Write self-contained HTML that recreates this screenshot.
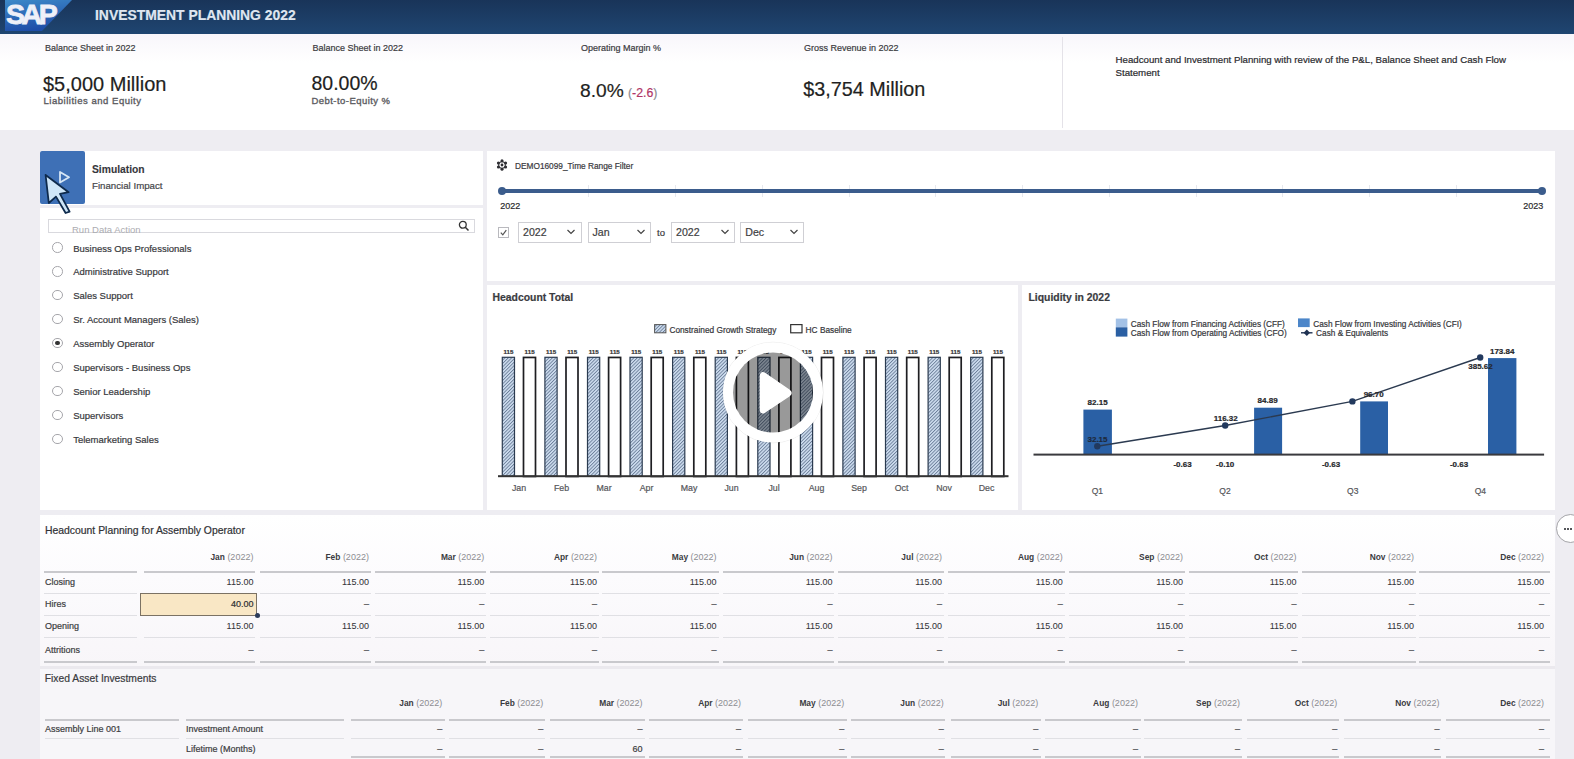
<!DOCTYPE html><html><head><meta charset="utf-8"><style>
*{margin:0;padding:0;box-sizing:border-box}
html,body{width:1574px;height:759px;overflow:hidden;background:#eeedf2;font-family:"Liberation Sans",sans-serif;color:#32363a}
.t{position:absolute;white-space:nowrap;line-height:1;z-index:2;-webkit-text-stroke:0.2px currentColor}
.b{position:absolute}
</style></head><body>
<div class="b" style="left:0;top:0;width:1574px;height:34px;background:linear-gradient(#193459,#1f4571)"></div>
<svg class="b" style="left:0;top:0" width="80" height="34"><defs><linearGradient id="sapg" x1="0" y1="0" x2="0.3" y2="1"><stop offset="0" stop-color="#3d8ac9"/><stop offset="1" stop-color="#1f4ea8"/></linearGradient></defs><polygon points="5,0 72,0 42,31 5,31" fill="url(#sapg)"/></svg>
<div class="t" style="left:6.0px;top:0.37px;font-size:28.5px;font-weight:bold;color:#eef0f8;letter-spacing:-3.4px;-webkit-text-stroke:0.8px #eef0f8">SAP</div>
<div class="t" style="left:95.0px;top:8.73px;font-size:13.9px;font-weight:bold;color:#dfe6f0">INVESTMENT PLANNING 2022</div>
<div class="b" style="left:0;top:34px;width:1574px;height:96px;background:linear-gradient(#f8f6fb,#fff 30%)"></div>
<div class="b" style="left:1062px;top:37px;width:1px;height:91px;background:#e4e2e8"></div>
<div class="t" style="left:45.0px;top:44.38px;font-size:9px;color:#3b3b3f">Balance Sheet in 2022</div>
<div class="t" style="left:43.0px;top:73.87px;font-size:20px;color:#1f1f22">$5,000 Million</div>
<div class="t" style="left:43.5px;top:95.86px;font-size:9.5px;color:#5c5c62;letter-spacing:0.52px;-webkit-text-stroke:0.35px currentColor">Liabilities and Equity</div>
<div class="t" style="left:312.5px;top:44.38px;font-size:9px;color:#3b3b3f">Balance Sheet in 2022</div>
<div class="t" style="left:311.5px;top:74.09px;font-size:19.5px;color:#1f1f22">80.00%</div>
<div class="t" style="left:311.5px;top:95.86px;font-size:9.5px;color:#5c5c62;letter-spacing:0.45px;-webkit-text-stroke:0.35px currentColor">Debt-to-Equity %</div>
<div class="t" style="left:581.0px;top:44.38px;font-size:9px;color:#3b3b3f">Operating Margin %</div>
<div class="t" style="left:580.0px;top:80.85px;font-size:19.2px;color:#1f1f22">8.0%</div>
<div class="t" style="left:628.0px;top:86.69px;font-size:12.3px;color:#8a8a90">(<span style="color:#b03466">-2.6</span>)</div>
<div class="t" style="left:804.0px;top:44.38px;font-size:9px;color:#3b3b3f">Gross Revenue in 2022</div>
<div class="t" style="left:803.3px;top:80.34px;font-size:19.8px;color:#1f1f22">$3,754 Million</div>
<div class="t" style="left:1115.5px;top:55.29px;font-size:9.7px;color:#2a2a2e">Headcount and Investment Planning with review of the P&amp;L, Balance Sheet and Cash Flow</div>
<div class="t" style="left:1115.5px;top:68.29px;font-size:9.7px;color:#2a2a2e">Statement</div>
<div class="b" style="left:40px;top:151px;width:443px;height:54px;background:#fff;"></div>
<div class="b" style="left:40px;top:208px;width:443px;height:302px;background:#fff;"></div>
<div class="b" style="left:487px;top:151px;width:1068px;height:130px;background:#fff;"></div>
<div class="b" style="left:487px;top:285px;width:531px;height:225px;background:#fff;"></div>
<div class="b" style="left:1022px;top:285px;width:533px;height:225px;background:#fff;"></div>
<div class="b" style="left:40px;top:515px;width:1515px;height:152px;background:linear-gradient(#fff,#fcfbfd 40%,#f8f6f9);"></div>
<div class="b" style="left:40px;top:665.5px;width:1515px;height:3px;background:#ebe9ee;"></div>
<div class="b" style="left:40px;top:668.5px;width:1515px;height:91px;background:#f7f6f9;"></div>
<div class="b" style="left:40px;top:151px;width:45px;height:53px;background:#3e70b6;border-radius:2px"></div>
<svg class="b" style="left:57px;top:169px" width="16" height="17"><polygon points="3,3 12,8.3 3,13.5" fill="none" stroke="#d6e6f6" stroke-width="1.8" stroke-linejoin="round"/></svg>
<div class="t" style="left:92.0px;top:165.48px;font-size:10.3px;font-weight:bold;color:#36373b;-webkit-text-stroke:0.1px">Simulation</div>
<div class="t" style="left:92.0px;top:181.39px;font-size:9.7px;color:#45464a">Financial Impact</div>
<div class="b" style="left:48px;top:219px;width:427px;height:14px;border:1px solid #d9d9de;background:#fff"></div>
<div class="t" style="left:72.0px;top:225.26px;font-size:9.5px;color:#acacb1;-webkit-text-stroke:0">Run Data Action</div>
<svg class="b" style="left:458px;top:220px" width="12" height="12"><circle cx="4.8" cy="4.8" r="3.4" fill="none" stroke="#333" stroke-width="1.3"/><line x1="7.3" y1="7.3" x2="10.5" y2="10.5" stroke="#333" stroke-width="1.5"/></svg>
<div class="b" style="left:52.2px;top:242.3px;width:10.4px;height:10.4px;border:1.3px solid #a6a6ab;border-radius:50%;background:#fff"></div>
<div class="t" style="left:73.2px;top:243.56px;font-size:9.5px;color:#38393d">Business Ops Professionals</div>
<div class="b" style="left:52.2px;top:266.2px;width:10.4px;height:10.4px;border:1.3px solid #a6a6ab;border-radius:50%;background:#fff"></div>
<div class="t" style="left:73.2px;top:267.46px;font-size:9.5px;color:#38393d">Administrative Support</div>
<div class="b" style="left:52.2px;top:290.1px;width:10.4px;height:10.4px;border:1.3px solid #a6a6ab;border-radius:50%;background:#fff"></div>
<div class="t" style="left:73.2px;top:291.36px;font-size:9.5px;color:#38393d">Sales Support</div>
<div class="b" style="left:52.2px;top:314.0px;width:10.4px;height:10.4px;border:1.3px solid #a6a6ab;border-radius:50%;background:#fff"></div>
<div class="t" style="left:73.2px;top:315.26px;font-size:9.5px;color:#38393d">Sr. Account Managers (Sales)</div>
<div class="b" style="left:52.2px;top:337.9px;width:10.4px;height:10.4px;border:1.3px solid #a6a6ab;border-radius:50%;background:#fff"></div>
<div class="b" style="left:55.2px;top:340.9px;width:4.4px;height:4.4px;border-radius:50%;background:#333"></div>
<div class="t" style="left:73.2px;top:339.16px;font-size:9.5px;color:#38393d">Assembly Operator</div>
<div class="b" style="left:52.2px;top:361.8px;width:10.4px;height:10.4px;border:1.3px solid #a6a6ab;border-radius:50%;background:#fff"></div>
<div class="t" style="left:73.2px;top:363.06px;font-size:9.5px;color:#38393d">Supervisors - Business Ops</div>
<div class="b" style="left:52.2px;top:385.7px;width:10.4px;height:10.4px;border:1.3px solid #a6a6ab;border-radius:50%;background:#fff"></div>
<div class="t" style="left:73.2px;top:386.96px;font-size:9.5px;color:#38393d">Senior Leadership</div>
<div class="b" style="left:52.2px;top:409.6px;width:10.4px;height:10.4px;border:1.3px solid #a6a6ab;border-radius:50%;background:#fff"></div>
<div class="t" style="left:73.2px;top:410.86px;font-size:9.5px;color:#38393d">Supervisors</div>
<div class="b" style="left:52.2px;top:433.5px;width:10.4px;height:10.4px;border:1.3px solid #a6a6ab;border-radius:50%;background:#fff"></div>
<div class="t" style="left:73.2px;top:434.76px;font-size:9.5px;color:#38393d">Telemarketing Sales</div>
<svg class="b" style="left:40px;top:170px" width="36" height="48"><path d="M5.6,5 L28.6,22.2 L20,23.9 L29.6,41.6 L25.6,43 L16,26.6 L8.8,33 Z" fill="#cfe6f8" stroke="#0e2a4c" stroke-width="1.8" stroke-linejoin="round"/></svg>
<svg class="b" style="left:496px;top:159px" width="12" height="12"><circle cx="6" cy="6" r="3.3" fill="none" stroke="#2e2e33" stroke-width="1.1"/><circle cx="6.00" cy="10.20" r="1.5" fill="#2e2e33"/><circle cx="9.64" cy="8.10" r="1.5" fill="#2e2e33"/><circle cx="9.64" cy="3.90" r="1.5" fill="#2e2e33"/><circle cx="6.00" cy="1.80" r="1.5" fill="#2e2e33"/><circle cx="2.36" cy="3.90" r="1.5" fill="#2e2e33"/><circle cx="2.36" cy="8.10" r="1.5" fill="#2e2e33"/><circle cx="6" cy="6" r="1.4" fill="#2e2e33"/></svg>
<div class="t" style="left:515.0px;top:161.87px;font-size:8.3px;color:#3a3a3e">DEMO16099_Time Range Filter</div>
<div class="b" style="left:588.2px;top:185px;width:1px;height:12px;background:#e6e8ee"></div>
<div class="b" style="left:675.0px;top:185px;width:1px;height:12px;background:#e6e8ee"></div>
<div class="b" style="left:761.8px;top:185px;width:1px;height:12px;background:#e6e8ee"></div>
<div class="b" style="left:848.5px;top:185px;width:1px;height:12px;background:#e6e8ee"></div>
<div class="b" style="left:935.2px;top:185px;width:1px;height:12px;background:#e6e8ee"></div>
<div class="b" style="left:1022.0px;top:185px;width:1px;height:12px;background:#e6e8ee"></div>
<div class="b" style="left:1108.8px;top:185px;width:1px;height:12px;background:#e6e8ee"></div>
<div class="b" style="left:1195.5px;top:185px;width:1px;height:12px;background:#e6e8ee"></div>
<div class="b" style="left:1282.2px;top:185px;width:1px;height:12px;background:#e6e8ee"></div>
<div class="b" style="left:1369.0px;top:185px;width:1px;height:12px;background:#e6e8ee"></div>
<div class="b" style="left:1455.8px;top:185px;width:1px;height:12px;background:#e6e8ee"></div>
<div class="b" style="left:501px;top:189.2px;width:1041px;height:3.6px;background:#3b5c8c;border-radius:2px"></div>
<div class="b" style="left:497.5px;top:187px;width:8px;height:8px;background:#3b5c8c;border-radius:50%"></div>
<div class="b" style="left:1537.5px;top:187px;width:8px;height:8px;background:#3b5c8c;border-radius:50%"></div>
<div class="t" style="left:500.2px;top:202.18px;font-size:9px;color:#2b2b2e">2022</div>
<div class="t" style="left:1523.3px;top:202.18px;font-size:9px;color:#2b2b2e">2023</div>
<div class="b" style="left:498px;top:227px;width:11px;height:11px;border:1px solid #b9b9be;background:#fff"></div>
<svg class="b" style="left:498px;top:227px" width="11" height="11"><polyline points="2.8,5.6 4.8,7.8 8.3,3.2" fill="none" stroke="#555" stroke-width="1.2"/></svg>
<div class="b" style="left:518px;top:221.5px;width:63.5px;height:21px;border:1px solid #cfcfd4;background:#fff"></div>
<div class="t" style="left:523.0px;top:227.13px;font-size:10.6px;color:#3e3e42">2022</div>
<svg class="b" style="left:566.0px;top:228px" width="10" height="8"><polyline points="1.5,2 5,5.5 8.5,2" fill="none" stroke="#444" stroke-width="1.2"/></svg>
<div class="b" style="left:587.5px;top:221.5px;width:63.5px;height:21px;border:1px solid #cfcfd4;background:#fff"></div>
<div class="t" style="left:592.5px;top:227.13px;font-size:10.6px;color:#3e3e42">Jan</div>
<svg class="b" style="left:635.5px;top:228px" width="10" height="8"><polyline points="1.5,2 5,5.5 8.5,2" fill="none" stroke="#444" stroke-width="1.2"/></svg>
<div class="t" style="left:657.0px;top:228.06px;font-size:9.5px;color:#3a3a3e">to</div>
<div class="b" style="left:671px;top:221.5px;width:64px;height:21px;border:1px solid #cfcfd4;background:#fff"></div>
<div class="t" style="left:676.0px;top:227.13px;font-size:10.6px;color:#3e3e42">2022</div>
<svg class="b" style="left:719.5px;top:228px" width="10" height="8"><polyline points="1.5,2 5,5.5 8.5,2" fill="none" stroke="#444" stroke-width="1.2"/></svg>
<div class="b" style="left:740.3px;top:221.5px;width:64px;height:21px;border:1px solid #cfcfd4;background:#fff"></div>
<div class="t" style="left:745.3px;top:227.13px;font-size:10.6px;color:#3e3e42">Dec</div>
<svg class="b" style="left:788.8px;top:228px" width="10" height="8"><polyline points="1.5,2 5,5.5 8.5,2" fill="none" stroke="#444" stroke-width="1.2"/></svg>
<div class="t" style="left:492.5px;top:293.20px;font-size:10.4px;font-weight:bold;color:#3a3b3f">Headcount Total</div>
<div class="t" style="left:669.4px;top:325.57px;font-size:8.3px;color:#36373b">Constrained Growth Strategy</div>
<div class="t" style="left:805.6px;top:325.57px;font-size:8.3px;color:#36373b">HC Baseline</div>
<div class="t" style="left:508.5px;transform:translateX(-50%);top:349.15px;font-size:6.2px;font-weight:bold;color:#333">115</div>
<div class="t" style="left:529.6px;transform:translateX(-50%);top:349.15px;font-size:6.2px;font-weight:bold;color:#333">115</div>
<div class="t" style="left:519.0px;transform:translateX(-50%);top:483.55px;font-size:8.8px;color:#55565a">Jan</div>
<div class="t" style="left:551.1px;transform:translateX(-50%);top:349.15px;font-size:6.2px;font-weight:bold;color:#333">115</div>
<div class="t" style="left:572.2px;transform:translateX(-50%);top:349.15px;font-size:6.2px;font-weight:bold;color:#333">115</div>
<div class="t" style="left:561.5px;transform:translateX(-50%);top:483.55px;font-size:8.8px;color:#55565a">Feb</div>
<div class="t" style="left:593.7px;transform:translateX(-50%);top:349.15px;font-size:6.2px;font-weight:bold;color:#333">115</div>
<div class="t" style="left:614.8px;transform:translateX(-50%);top:349.15px;font-size:6.2px;font-weight:bold;color:#333">115</div>
<div class="t" style="left:604.0px;transform:translateX(-50%);top:483.55px;font-size:8.8px;color:#55565a">Mar</div>
<div class="t" style="left:636.2px;transform:translateX(-50%);top:349.15px;font-size:6.2px;font-weight:bold;color:#333">115</div>
<div class="t" style="left:657.3px;transform:translateX(-50%);top:349.15px;font-size:6.2px;font-weight:bold;color:#333">115</div>
<div class="t" style="left:646.5px;transform:translateX(-50%);top:483.55px;font-size:8.8px;color:#55565a">Apr</div>
<div class="t" style="left:678.8px;transform:translateX(-50%);top:349.15px;font-size:6.2px;font-weight:bold;color:#333">115</div>
<div class="t" style="left:699.9px;transform:translateX(-50%);top:349.15px;font-size:6.2px;font-weight:bold;color:#333">115</div>
<div class="t" style="left:689.0px;transform:translateX(-50%);top:483.55px;font-size:8.8px;color:#55565a">May</div>
<div class="t" style="left:721.4px;transform:translateX(-50%);top:349.15px;font-size:6.2px;font-weight:bold;color:#333">115</div>
<div class="t" style="left:742.5px;transform:translateX(-50%);top:349.15px;font-size:6.2px;font-weight:bold;color:#333">115</div>
<div class="t" style="left:731.5px;transform:translateX(-50%);top:483.55px;font-size:8.8px;color:#55565a">Jun</div>
<div class="t" style="left:764.0px;transform:translateX(-50%);top:349.15px;font-size:6.2px;font-weight:bold;color:#333">115</div>
<div class="t" style="left:785.1px;transform:translateX(-50%);top:349.15px;font-size:6.2px;font-weight:bold;color:#333">115</div>
<div class="t" style="left:774.0px;transform:translateX(-50%);top:483.55px;font-size:8.8px;color:#55565a">Jul</div>
<div class="t" style="left:806.6px;transform:translateX(-50%);top:349.15px;font-size:6.2px;font-weight:bold;color:#333">115</div>
<div class="t" style="left:827.7px;transform:translateX(-50%);top:349.15px;font-size:6.2px;font-weight:bold;color:#333">115</div>
<div class="t" style="left:816.5px;transform:translateX(-50%);top:483.55px;font-size:8.8px;color:#55565a">Aug</div>
<div class="t" style="left:849.1px;transform:translateX(-50%);top:349.15px;font-size:6.2px;font-weight:bold;color:#333">115</div>
<div class="t" style="left:870.2px;transform:translateX(-50%);top:349.15px;font-size:6.2px;font-weight:bold;color:#333">115</div>
<div class="t" style="left:859.0px;transform:translateX(-50%);top:483.55px;font-size:8.8px;color:#55565a">Sep</div>
<div class="t" style="left:891.7px;transform:translateX(-50%);top:349.15px;font-size:6.2px;font-weight:bold;color:#333">115</div>
<div class="t" style="left:912.8px;transform:translateX(-50%);top:349.15px;font-size:6.2px;font-weight:bold;color:#333">115</div>
<div class="t" style="left:901.5px;transform:translateX(-50%);top:483.55px;font-size:8.8px;color:#55565a">Oct</div>
<div class="t" style="left:934.3px;transform:translateX(-50%);top:349.15px;font-size:6.2px;font-weight:bold;color:#333">115</div>
<div class="t" style="left:955.4px;transform:translateX(-50%);top:349.15px;font-size:6.2px;font-weight:bold;color:#333">115</div>
<div class="t" style="left:944.0px;transform:translateX(-50%);top:483.55px;font-size:8.8px;color:#55565a">Nov</div>
<div class="t" style="left:976.9px;transform:translateX(-50%);top:349.15px;font-size:6.2px;font-weight:bold;color:#333">115</div>
<div class="t" style="left:998.0px;transform:translateX(-50%);top:349.15px;font-size:6.2px;font-weight:bold;color:#333">115</div>
<div class="t" style="left:986.5px;transform:translateX(-50%);top:483.55px;font-size:8.8px;color:#55565a">Dec</div>
<div class="t" style="left:1028.5px;top:293.20px;font-size:10.4px;font-weight:bold;color:#3a3b3f">Liquidity in 2022</div>
<div class="t" style="left:1130.8px;top:320.82px;font-size:8.25px;color:#36373b">Cash Flow from Financing Activities (CFF)</div>
<div class="t" style="left:1130.8px;top:329.82px;font-size:8.25px;color:#36373b">Cash Flow from Operating Activities (CFO)</div>
<div class="t" style="left:1313.3px;top:320.82px;font-size:8.25px;color:#36373b">Cash Flow from Investing Activities (CFI)</div>
<div class="t" style="left:1316.1px;top:329.82px;font-size:8.25px;color:#36373b">Cash &amp; Equivalents</div>
<div class="t" style="left:1097.6px;transform:translateX(-50%);top:399.33px;font-size:8px;font-weight:bold;color:#26272b">82.15</div>
<div class="t" style="left:1267.6px;transform:translateX(-50%);top:397.13px;font-size:8px;font-weight:bold;color:#26272b">84.89</div>
<div class="t" style="left:1373.7px;transform:translateX(-50%);top:391.03px;font-size:8px;font-weight:bold;color:#26272b">96.70</div>
<div class="t" style="left:1502.2px;transform:translateX(-50%);top:348.33px;font-size:8px;font-weight:bold;color:#26272b">173.84</div>
<div class="t" style="left:1097.5px;transform:translateX(-50%);top:435.73px;font-size:8px;font-weight:bold;color:#1e2a3c">32.15</div>
<div class="t" style="left:1225.7px;transform:translateX(-50%);top:414.83px;font-size:8px;font-weight:bold;color:#26272b">116.32</div>
<div class="t" style="left:1480.5px;transform:translateX(-50%);top:363.03px;font-size:8px;font-weight:bold;color:#26272b">385.62</div>
<div class="t" style="left:1182.5px;transform:translateX(-50%);top:460.63px;font-size:8px;font-weight:bold;color:#26272b">-0.63</div>
<div class="t" style="left:1225.2px;transform:translateX(-50%);top:460.63px;font-size:8px;font-weight:bold;color:#26272b">-0.10</div>
<div class="t" style="left:1331.0px;transform:translateX(-50%);top:460.63px;font-size:8px;font-weight:bold;color:#26272b">-0.63</div>
<div class="t" style="left:1459.0px;transform:translateX(-50%);top:460.63px;font-size:8px;font-weight:bold;color:#26272b">-0.63</div>
<div class="t" style="left:1097.3px;transform:translateX(-50%);top:487.40px;font-size:8.5px;color:#55565a">Q1</div>
<div class="t" style="left:1225.0px;transform:translateX(-50%);top:487.40px;font-size:8.5px;color:#55565a">Q2</div>
<div class="t" style="left:1352.7px;transform:translateX(-50%);top:487.40px;font-size:8.5px;color:#55565a">Q3</div>
<div class="t" style="left:1480.4px;transform:translateX(-50%);top:487.40px;font-size:8.5px;color:#55565a">Q4</div>
<svg class="b" style="left:0;top:0" width="1574" height="759"><defs><pattern id="hatch" patternUnits="userSpaceOnUse" width="2.4" height="2.4" patternTransform="rotate(45)"><rect width="2.4" height="2.4" fill="#cfdef0"/><rect width="0.9" height="2.4" fill="#6b7e99"/></pattern></defs><rect x="654.6" y="324.6" width="11.3" height="8.2" fill="url(#hatch)" stroke="#555" stroke-width="1"/><rect x="790.7" y="324.6" width="11.3" height="8.2" fill="#fff" stroke="#333" stroke-width="1.2"/><rect x="502.3" y="357.3" width="12.2" height="119" fill="url(#hatch)" stroke="#2b3b50" stroke-width="1.2"/><rect x="523.5" y="357.45" width="12" height="119" fill="#fff" stroke="#1e1e22" stroke-width="1.7"/><rect x="544.9" y="357.3" width="12.2" height="119" fill="url(#hatch)" stroke="#2b3b50" stroke-width="1.2"/><rect x="566.0" y="357.45" width="12" height="119" fill="#fff" stroke="#1e1e22" stroke-width="1.7"/><rect x="587.5" y="357.3" width="12.2" height="119" fill="url(#hatch)" stroke="#2b3b50" stroke-width="1.2"/><rect x="608.6" y="357.45" width="12" height="119" fill="#fff" stroke="#1e1e22" stroke-width="1.7"/><rect x="630.0" y="357.3" width="12.2" height="119" fill="url(#hatch)" stroke="#2b3b50" stroke-width="1.2"/><rect x="651.2" y="357.45" width="12" height="119" fill="#fff" stroke="#1e1e22" stroke-width="1.7"/><rect x="672.6" y="357.3" width="12.2" height="119" fill="url(#hatch)" stroke="#2b3b50" stroke-width="1.2"/><rect x="693.8" y="357.45" width="12" height="119" fill="#fff" stroke="#1e1e22" stroke-width="1.7"/><rect x="715.2" y="357.3" width="12.2" height="119" fill="url(#hatch)" stroke="#2b3b50" stroke-width="1.2"/><rect x="736.4" y="357.45" width="12" height="119" fill="#fff" stroke="#1e1e22" stroke-width="1.7"/><rect x="757.8" y="357.3" width="12.2" height="119" fill="url(#hatch)" stroke="#2b3b50" stroke-width="1.2"/><rect x="778.9" y="357.45" width="12" height="119" fill="#fff" stroke="#1e1e22" stroke-width="1.7"/><rect x="800.4" y="357.3" width="12.2" height="119" fill="url(#hatch)" stroke="#2b3b50" stroke-width="1.2"/><rect x="821.5" y="357.45" width="12" height="119" fill="#fff" stroke="#1e1e22" stroke-width="1.7"/><rect x="842.9" y="357.3" width="12.2" height="119" fill="url(#hatch)" stroke="#2b3b50" stroke-width="1.2"/><rect x="864.1" y="357.45" width="12" height="119" fill="#fff" stroke="#1e1e22" stroke-width="1.7"/><rect x="885.5" y="357.3" width="12.2" height="119" fill="url(#hatch)" stroke="#2b3b50" stroke-width="1.2"/><rect x="906.7" y="357.45" width="12" height="119" fill="#fff" stroke="#1e1e22" stroke-width="1.7"/><rect x="928.1" y="357.3" width="12.2" height="119" fill="url(#hatch)" stroke="#2b3b50" stroke-width="1.2"/><rect x="949.2" y="357.45" width="12" height="119" fill="#fff" stroke="#1e1e22" stroke-width="1.7"/><rect x="970.7" y="357.3" width="12.2" height="119" fill="url(#hatch)" stroke="#2b3b50" stroke-width="1.2"/><rect x="991.8" y="357.45" width="12" height="119" fill="#fff" stroke="#1e1e22" stroke-width="1.7"/><rect x="498" y="475.2" width="510.5" height="2" fill="#333"/><rect x="1115.8" y="318.6" width="11.6" height="8.7" fill="#a3c1e6"/><rect x="1115.8" y="327.3" width="11.6" height="9.3" fill="#2a5fa3"/><rect x="1298" y="318.4" width="11.7" height="8.7" fill="#4c86c9"/><line x1="1301" y1="332.8" x2="1312.5" y2="332.8" stroke="#1f3252" stroke-width="1.4"/><path d="M1306.8,329.6 L1310,332.8 L1306.8,336 L1303.6,332.8 Z" fill="#1f3252"/><rect x="1083.4" y="409.6" width="28.5" height="45.0" fill="#2a60a5"/><rect x="1254.1" y="407.7" width="28.0" height="46.9" fill="#2a60a5"/><rect x="1360.2" y="401.4" width="27.8" height="53.2" fill="#2a60a5"/><rect x="1488" y="358.1" width="28.4" height="96.5" fill="#2a60a5"/><rect x="1033.5" y="453.6" width="510.6" height="2" fill="#3a3a3e"/><polyline points="1097.3,446.3 1225.2,425.5 1352.4,401.4 1480.2,357.5" fill="none" stroke="#2b3a50" stroke-width="1.4"/><circle cx="1097.3" cy="446.3" r="3.2" fill="#22395e"/><circle cx="1225.2" cy="425.5" r="3.2" fill="#22395e"/><circle cx="1352.4" cy="401.4" r="3.2" fill="#22395e"/><circle cx="1480.2" cy="357.5" r="3.2" fill="#22395e"/></svg>
<div class="t" style="left:45.0px;top:525.50px;font-size:10.4px;color:#303135">Headcount Planning for Assembly Operator</div>
<div class="b" style="left:140.4px;top:593px;width:117px;height:22.5px;background:#f9e7c5;border:1px solid #7b7264;z-index:1"></div>
<div class="b" style="left:255px;top:613px;width:5px;height:5px;border-radius:50%;background:#2c3c5a;z-index:1"></div>
<div class="b" style="left:44.3px;top:570.5px;width:93.1px;height:2px;background:#c9c9cd"></div>
<div class="b" style="left:44.3px;top:660.8px;width:93.1px;height:2px;background:#c9c9cd"></div>
<div class="b" style="left:44.3px;top:593.0px;width:93.1px;height:1px;background:#e0e0e4"></div>
<div class="b" style="left:44.3px;top:615.0px;width:93.1px;height:1px;background:#e0e0e4"></div>
<div class="b" style="left:44.3px;top:637.3px;width:93.1px;height:1px;background:#e0e0e4"></div>
<div class="t" style="left:45.0px;top:578.28px;font-size:9px;color:#3c3d41">Closing</div>
<div class="t" style="left:45.0px;top:600.08px;font-size:9px;color:#3c3d41">Hires</div>
<div class="t" style="left:45.0px;top:622.38px;font-size:9px;color:#3c3d41">Opening</div>
<div class="t" style="left:45.0px;top:646.38px;font-size:9px;color:#3c3d41">Attritions</div>
<div class="t" style="right:1320.6px;top:553.48px;font-size:9px;color:#8d8d92;-webkit-text-stroke:0"><span style="font-weight:bold;color:#3a3b3f;font-size:8.4px;-webkit-text-stroke:0">Jan</span> (2022)</div>
<div class="b" style="left:144.1px;top:570.5px;width:111.3px;height:2px;background:#c9c9cd"></div>
<div class="b" style="left:144.1px;top:660.8px;width:111.3px;height:2px;background:#c9c9cd"></div>
<div class="b" style="left:144.1px;top:593.0px;width:111.3px;height:1px;background:#e0e0e4"></div>
<div class="b" style="left:144.1px;top:615.0px;width:111.3px;height:1px;background:#e0e0e4"></div>
<div class="b" style="left:144.1px;top:637.3px;width:111.3px;height:1px;background:#e0e0e4"></div>
<div class="t" style="right:1320.6px;top:578.28px;font-size:9px;color:#333438;-webkit-text-stroke:0.05px">115.00</div>
<div class="t" style="right:1320.6px;top:622.38px;font-size:9px;color:#333438;-webkit-text-stroke:0.05px">115.00</div>
<div class="t" style="right:1320.6px;top:646.38px;font-size:9px;color:#55565a">&ndash;</div>
<div class="t" style="right:1320.6px;top:600.08px;font-size:9px;color:#2e2f33">40.00</div>
<div class="t" style="right:1205.1px;top:553.48px;font-size:9px;color:#8d8d92;-webkit-text-stroke:0"><span style="font-weight:bold;color:#3a3b3f;font-size:8.4px;-webkit-text-stroke:0">Feb</span> (2022)</div>
<div class="b" style="left:259.7px;top:570.5px;width:111.8px;height:2px;background:#c9c9cd"></div>
<div class="b" style="left:259.7px;top:660.8px;width:111.8px;height:2px;background:#c9c9cd"></div>
<div class="b" style="left:259.7px;top:593.0px;width:111.8px;height:1px;background:#e0e0e4"></div>
<div class="b" style="left:259.7px;top:615.0px;width:111.8px;height:1px;background:#e0e0e4"></div>
<div class="b" style="left:259.7px;top:637.3px;width:111.8px;height:1px;background:#e0e0e4"></div>
<div class="t" style="right:1205.1px;top:578.28px;font-size:9px;color:#333438;-webkit-text-stroke:0.05px">115.00</div>
<div class="t" style="right:1205.1px;top:622.38px;font-size:9px;color:#333438;-webkit-text-stroke:0.05px">115.00</div>
<div class="t" style="right:1205.1px;top:646.38px;font-size:9px;color:#55565a">&ndash;</div>
<div class="t" style="right:1205.1px;top:600.08px;font-size:9px;color:#55565a">&ndash;</div>
<div class="t" style="right:1089.7px;top:553.48px;font-size:9px;color:#8d8d92;-webkit-text-stroke:0"><span style="font-weight:bold;color:#3a3b3f;font-size:8.4px;-webkit-text-stroke:0">Mar</span> (2022)</div>
<div class="b" style="left:375.0px;top:570.5px;width:111.3px;height:2px;background:#c9c9cd"></div>
<div class="b" style="left:375.0px;top:660.8px;width:111.3px;height:2px;background:#c9c9cd"></div>
<div class="b" style="left:375.0px;top:593.0px;width:111.3px;height:1px;background:#e0e0e4"></div>
<div class="b" style="left:375.0px;top:615.0px;width:111.3px;height:1px;background:#e0e0e4"></div>
<div class="b" style="left:375.0px;top:637.3px;width:111.3px;height:1px;background:#e0e0e4"></div>
<div class="t" style="right:1089.7px;top:578.28px;font-size:9px;color:#333438;-webkit-text-stroke:0.05px">115.00</div>
<div class="t" style="right:1089.7px;top:622.38px;font-size:9px;color:#333438;-webkit-text-stroke:0.05px">115.00</div>
<div class="t" style="right:1089.7px;top:646.38px;font-size:9px;color:#55565a">&ndash;</div>
<div class="t" style="right:1089.7px;top:600.08px;font-size:9px;color:#55565a">&ndash;</div>
<div class="t" style="right:977.1px;top:553.48px;font-size:9px;color:#8d8d92;-webkit-text-stroke:0"><span style="font-weight:bold;color:#3a3b3f;font-size:8.4px;-webkit-text-stroke:0">Apr</span> (2022)</div>
<div class="b" style="left:490.2px;top:570.5px;width:108.5px;height:2px;background:#c9c9cd"></div>
<div class="b" style="left:490.2px;top:660.8px;width:108.5px;height:2px;background:#c9c9cd"></div>
<div class="b" style="left:490.2px;top:593.0px;width:108.5px;height:1px;background:#e0e0e4"></div>
<div class="b" style="left:490.2px;top:615.0px;width:108.5px;height:1px;background:#e0e0e4"></div>
<div class="b" style="left:490.2px;top:637.3px;width:108.5px;height:1px;background:#e0e0e4"></div>
<div class="t" style="right:977.1px;top:578.28px;font-size:9px;color:#333438;-webkit-text-stroke:0.05px">115.00</div>
<div class="t" style="right:977.1px;top:622.38px;font-size:9px;color:#333438;-webkit-text-stroke:0.05px">115.00</div>
<div class="t" style="right:977.1px;top:646.38px;font-size:9px;color:#55565a">&ndash;</div>
<div class="t" style="right:977.1px;top:600.08px;font-size:9px;color:#55565a">&ndash;</div>
<div class="t" style="right:857.4px;top:553.48px;font-size:9px;color:#8d8d92;-webkit-text-stroke:0"><span style="font-weight:bold;color:#3a3b3f;font-size:8.4px;-webkit-text-stroke:0">May</span> (2022)</div>
<div class="b" style="left:602.4px;top:570.5px;width:116.6px;height:2px;background:#c9c9cd"></div>
<div class="b" style="left:602.4px;top:660.8px;width:116.6px;height:2px;background:#c9c9cd"></div>
<div class="b" style="left:602.4px;top:593.0px;width:116.6px;height:1px;background:#e0e0e4"></div>
<div class="b" style="left:602.4px;top:615.0px;width:116.6px;height:1px;background:#e0e0e4"></div>
<div class="b" style="left:602.4px;top:637.3px;width:116.6px;height:1px;background:#e0e0e4"></div>
<div class="t" style="right:857.4px;top:578.28px;font-size:9px;color:#333438;-webkit-text-stroke:0.05px">115.00</div>
<div class="t" style="right:857.4px;top:622.38px;font-size:9px;color:#333438;-webkit-text-stroke:0.05px">115.00</div>
<div class="t" style="right:857.4px;top:646.38px;font-size:9px;color:#55565a">&ndash;</div>
<div class="t" style="right:857.4px;top:600.08px;font-size:9px;color:#55565a">&ndash;</div>
<div class="t" style="right:741.4px;top:553.48px;font-size:9px;color:#8d8d92;-webkit-text-stroke:0"><span style="font-weight:bold;color:#3a3b3f;font-size:8.4px;-webkit-text-stroke:0">Jun</span> (2022)</div>
<div class="b" style="left:722.6px;top:570.5px;width:111.8px;height:2px;background:#c9c9cd"></div>
<div class="b" style="left:722.6px;top:660.8px;width:111.8px;height:2px;background:#c9c9cd"></div>
<div class="b" style="left:722.6px;top:593.0px;width:111.8px;height:1px;background:#e0e0e4"></div>
<div class="b" style="left:722.6px;top:615.0px;width:111.8px;height:1px;background:#e0e0e4"></div>
<div class="b" style="left:722.6px;top:637.3px;width:111.8px;height:1px;background:#e0e0e4"></div>
<div class="t" style="right:741.4px;top:578.28px;font-size:9px;color:#333438;-webkit-text-stroke:0.05px">115.00</div>
<div class="t" style="right:741.4px;top:622.38px;font-size:9px;color:#333438;-webkit-text-stroke:0.05px">115.00</div>
<div class="t" style="right:741.4px;top:646.38px;font-size:9px;color:#55565a">&ndash;</div>
<div class="t" style="right:741.4px;top:600.08px;font-size:9px;color:#55565a">&ndash;</div>
<div class="t" style="right:632.0px;top:553.48px;font-size:9px;color:#8d8d92;-webkit-text-stroke:0"><span style="font-weight:bold;color:#3a3b3f;font-size:8.4px;-webkit-text-stroke:0">Jul</span> (2022)</div>
<div class="b" style="left:838.2px;top:570.5px;width:105.5px;height:2px;background:#c9c9cd"></div>
<div class="b" style="left:838.2px;top:660.8px;width:105.5px;height:2px;background:#c9c9cd"></div>
<div class="b" style="left:838.2px;top:593.0px;width:105.5px;height:1px;background:#e0e0e4"></div>
<div class="b" style="left:838.2px;top:615.0px;width:105.5px;height:1px;background:#e0e0e4"></div>
<div class="b" style="left:838.2px;top:637.3px;width:105.5px;height:1px;background:#e0e0e4"></div>
<div class="t" style="right:632.0px;top:578.28px;font-size:9px;color:#333438;-webkit-text-stroke:0.05px">115.00</div>
<div class="t" style="right:632.0px;top:622.38px;font-size:9px;color:#333438;-webkit-text-stroke:0.05px">115.00</div>
<div class="t" style="right:632.0px;top:646.38px;font-size:9px;color:#55565a">&ndash;</div>
<div class="t" style="right:632.0px;top:600.08px;font-size:9px;color:#55565a">&ndash;</div>
<div class="t" style="right:511.3px;top:553.48px;font-size:9px;color:#8d8d92;-webkit-text-stroke:0"><span style="font-weight:bold;color:#3a3b3f;font-size:8.4px;-webkit-text-stroke:0">Aug</span> (2022)</div>
<div class="b" style="left:948.0px;top:570.5px;width:116.9px;height:2px;background:#c9c9cd"></div>
<div class="b" style="left:948.0px;top:660.8px;width:116.9px;height:2px;background:#c9c9cd"></div>
<div class="b" style="left:948.0px;top:593.0px;width:116.9px;height:1px;background:#e0e0e4"></div>
<div class="b" style="left:948.0px;top:615.0px;width:116.9px;height:1px;background:#e0e0e4"></div>
<div class="b" style="left:948.0px;top:637.3px;width:116.9px;height:1px;background:#e0e0e4"></div>
<div class="t" style="right:511.3px;top:578.28px;font-size:9px;color:#333438;-webkit-text-stroke:0.05px">115.00</div>
<div class="t" style="right:511.3px;top:622.38px;font-size:9px;color:#333438;-webkit-text-stroke:0.05px">115.00</div>
<div class="t" style="right:511.3px;top:646.38px;font-size:9px;color:#55565a">&ndash;</div>
<div class="t" style="right:511.3px;top:600.08px;font-size:9px;color:#55565a">&ndash;</div>
<div class="t" style="right:391.0px;top:553.48px;font-size:9px;color:#8d8d92;-webkit-text-stroke:0"><span style="font-weight:bold;color:#3a3b3f;font-size:8.4px;-webkit-text-stroke:0">Sep</span> (2022)</div>
<div class="b" style="left:1068.6px;top:570.5px;width:116.7px;height:2px;background:#c9c9cd"></div>
<div class="b" style="left:1068.6px;top:660.8px;width:116.7px;height:2px;background:#c9c9cd"></div>
<div class="b" style="left:1068.6px;top:593.0px;width:116.7px;height:1px;background:#e0e0e4"></div>
<div class="b" style="left:1068.6px;top:615.0px;width:116.7px;height:1px;background:#e0e0e4"></div>
<div class="b" style="left:1068.6px;top:637.3px;width:116.7px;height:1px;background:#e0e0e4"></div>
<div class="t" style="right:391.0px;top:578.28px;font-size:9px;color:#333438;-webkit-text-stroke:0.05px">115.00</div>
<div class="t" style="right:391.0px;top:622.38px;font-size:9px;color:#333438;-webkit-text-stroke:0.05px">115.00</div>
<div class="t" style="right:391.0px;top:646.38px;font-size:9px;color:#55565a">&ndash;</div>
<div class="t" style="right:391.0px;top:600.08px;font-size:9px;color:#55565a">&ndash;</div>
<div class="t" style="right:277.5px;top:553.48px;font-size:9px;color:#8d8d92;-webkit-text-stroke:0"><span style="font-weight:bold;color:#3a3b3f;font-size:8.4px;-webkit-text-stroke:0">Oct</span> (2022)</div>
<div class="b" style="left:1188.9px;top:570.5px;width:109.4px;height:2px;background:#c9c9cd"></div>
<div class="b" style="left:1188.9px;top:660.8px;width:109.4px;height:2px;background:#c9c9cd"></div>
<div class="b" style="left:1188.9px;top:593.0px;width:109.4px;height:1px;background:#e0e0e4"></div>
<div class="b" style="left:1188.9px;top:615.0px;width:109.4px;height:1px;background:#e0e0e4"></div>
<div class="b" style="left:1188.9px;top:637.3px;width:109.4px;height:1px;background:#e0e0e4"></div>
<div class="t" style="right:277.5px;top:578.28px;font-size:9px;color:#333438;-webkit-text-stroke:0.05px">115.00</div>
<div class="t" style="right:277.5px;top:622.38px;font-size:9px;color:#333438;-webkit-text-stroke:0.05px">115.00</div>
<div class="t" style="right:277.5px;top:646.38px;font-size:9px;color:#55565a">&ndash;</div>
<div class="t" style="right:277.5px;top:600.08px;font-size:9px;color:#55565a">&ndash;</div>
<div class="t" style="right:160.0px;top:553.48px;font-size:9px;color:#8d8d92;-webkit-text-stroke:0"><span style="font-weight:bold;color:#3a3b3f;font-size:8.4px;-webkit-text-stroke:0">Nov</span> (2022)</div>
<div class="b" style="left:1302.0px;top:570.5px;width:113.8px;height:2px;background:#c9c9cd"></div>
<div class="b" style="left:1302.0px;top:660.8px;width:113.8px;height:2px;background:#c9c9cd"></div>
<div class="b" style="left:1302.0px;top:593.0px;width:113.8px;height:1px;background:#e0e0e4"></div>
<div class="b" style="left:1302.0px;top:615.0px;width:113.8px;height:1px;background:#e0e0e4"></div>
<div class="b" style="left:1302.0px;top:637.3px;width:113.8px;height:1px;background:#e0e0e4"></div>
<div class="t" style="right:160.0px;top:578.28px;font-size:9px;color:#333438;-webkit-text-stroke:0.05px">115.00</div>
<div class="t" style="right:160.0px;top:622.38px;font-size:9px;color:#333438;-webkit-text-stroke:0.05px">115.00</div>
<div class="t" style="right:160.0px;top:646.38px;font-size:9px;color:#55565a">&ndash;</div>
<div class="t" style="right:160.0px;top:600.08px;font-size:9px;color:#55565a">&ndash;</div>
<div class="t" style="right:29.9px;top:553.48px;font-size:9px;color:#8d8d92;-webkit-text-stroke:0"><span style="font-weight:bold;color:#3a3b3f;font-size:8.4px;-webkit-text-stroke:0">Dec</span> (2022)</div>
<div class="b" style="left:1419.4px;top:570.5px;width:130.6px;height:2px;background:#c9c9cd"></div>
<div class="b" style="left:1419.4px;top:660.8px;width:130.6px;height:2px;background:#c9c9cd"></div>
<div class="b" style="left:1419.4px;top:593.0px;width:130.6px;height:1px;background:#e0e0e4"></div>
<div class="b" style="left:1419.4px;top:615.0px;width:130.6px;height:1px;background:#e0e0e4"></div>
<div class="b" style="left:1419.4px;top:637.3px;width:130.6px;height:1px;background:#e0e0e4"></div>
<div class="t" style="right:29.9px;top:578.28px;font-size:9px;color:#333438;-webkit-text-stroke:0.05px">115.00</div>
<div class="t" style="right:29.9px;top:622.38px;font-size:9px;color:#333438;-webkit-text-stroke:0.05px">115.00</div>
<div class="t" style="right:29.9px;top:646.38px;font-size:9px;color:#55565a">&ndash;</div>
<div class="t" style="right:29.9px;top:600.08px;font-size:9px;color:#55565a">&ndash;</div>
<div class="b" style="left:1555.7px;top:513.8px;width:29.5px;height:29.5px;border-radius:50%;background:#fff;border:1.5px solid #a4a4a8;z-index:3"></div>
<div class="b" style="left:1564.0px;top:527.5px;width:2px;height:2px;background:#55565a;z-index:4"></div>
<div class="b" style="left:1566.9px;top:527.5px;width:2px;height:2px;background:#55565a;z-index:4"></div>
<div class="b" style="left:1569.8px;top:527.5px;width:2px;height:2px;background:#55565a;z-index:4"></div>
<div class="t" style="left:44.8px;top:674.08px;font-size:10.3px;color:#3a3b3f">Fixed Asset Investments</div>
<div class="b" style="left:44.6px;top:718.6px;width:134.6px;height:2px;background:#c9c9cd"></div>
<div class="b" style="left:186.0px;top:718.6px;width:158.3px;height:2px;background:#c9c9cd"></div>
<div class="b" style="left:44.6px;top:738.3px;width:134.6px;height:1px;background:#e0e0e4"></div>
<div class="b" style="left:186.0px;top:738.3px;width:158.3px;height:1px;background:#e0e0e4"></div>
<div class="t" style="left:45.0px;top:725.48px;font-size:9px;color:#3c3d41">Assembly Line 001</div>
<div class="t" style="left:186.0px;top:725.48px;font-size:9px;color:#3c3d41">Investment Amount</div>
<div class="t" style="left:186.0px;top:744.68px;font-size:9px;color:#3c3d41">Lifetime (Months)</div>
<div class="t" style="right:1131.8px;top:699.48px;font-size:9px;color:#8d8d92;-webkit-text-stroke:0"><span style="font-weight:bold;color:#3a3b3f;font-size:8.4px;-webkit-text-stroke:0">Jan</span> (2022)</div>
<div class="b" style="left:350.7px;top:718.6px;width:94.3px;height:2px;background:#c9c9cd"></div>
<div class="b" style="left:350.7px;top:738.3px;width:94.3px;height:1px;background:#e0e0e4"></div>
<div class="b" style="left:350.7px;top:756.3px;width:94.3px;height:2px;background:#c9c9cd"></div>
<div class="t" style="right:1131.8px;top:725.48px;font-size:9px;color:#55565a">&ndash;</div>
<div class="t" style="right:1131.8px;top:744.68px;font-size:9px;color:#55565a">&ndash;</div>
<div class="t" style="right:1030.7px;top:699.48px;font-size:9px;color:#8d8d92;-webkit-text-stroke:0"><span style="font-weight:bold;color:#3a3b3f;font-size:8.4px;-webkit-text-stroke:0">Feb</span> (2022)</div>
<div class="b" style="left:448.7px;top:718.6px;width:96.5px;height:2px;background:#c9c9cd"></div>
<div class="b" style="left:448.7px;top:738.3px;width:96.5px;height:1px;background:#e0e0e4"></div>
<div class="b" style="left:448.7px;top:756.3px;width:96.5px;height:2px;background:#c9c9cd"></div>
<div class="t" style="right:1030.7px;top:725.48px;font-size:9px;color:#55565a">&ndash;</div>
<div class="t" style="right:1030.7px;top:744.68px;font-size:9px;color:#55565a">&ndash;</div>
<div class="t" style="right:931.4px;top:699.48px;font-size:9px;color:#8d8d92;-webkit-text-stroke:0"><span style="font-weight:bold;color:#3a3b3f;font-size:8.4px;-webkit-text-stroke:0">Mar</span> (2022)</div>
<div class="b" style="left:549.6px;top:718.6px;width:95.4px;height:2px;background:#c9c9cd"></div>
<div class="b" style="left:549.6px;top:738.3px;width:95.4px;height:1px;background:#e0e0e4"></div>
<div class="b" style="left:549.6px;top:756.3px;width:95.4px;height:2px;background:#c9c9cd"></div>
<div class="t" style="right:931.4px;top:725.48px;font-size:9px;color:#55565a">&ndash;</div>
<div class="t" style="right:931.4px;top:744.68px;font-size:9px;color:#3c3d41">60</div>
<div class="t" style="right:832.9px;top:699.48px;font-size:9px;color:#8d8d92;-webkit-text-stroke:0"><span style="font-weight:bold;color:#3a3b3f;font-size:8.4px;-webkit-text-stroke:0">Apr</span> (2022)</div>
<div class="b" style="left:649.2px;top:718.6px;width:93.6px;height:2px;background:#c9c9cd"></div>
<div class="b" style="left:649.2px;top:738.3px;width:93.6px;height:1px;background:#e0e0e4"></div>
<div class="b" style="left:649.2px;top:756.3px;width:93.6px;height:2px;background:#c9c9cd"></div>
<div class="t" style="right:832.9px;top:725.48px;font-size:9px;color:#55565a">&ndash;</div>
<div class="t" style="right:832.9px;top:744.68px;font-size:9px;color:#55565a">&ndash;</div>
<div class="t" style="right:729.8px;top:699.48px;font-size:9px;color:#8d8d92;-webkit-text-stroke:0"><span style="font-weight:bold;color:#3a3b3f;font-size:8.4px;-webkit-text-stroke:0">May</span> (2022)</div>
<div class="b" style="left:748.0px;top:718.6px;width:98.6px;height:2px;background:#c9c9cd"></div>
<div class="b" style="left:748.0px;top:738.3px;width:98.6px;height:1px;background:#e0e0e4"></div>
<div class="b" style="left:748.0px;top:756.3px;width:98.6px;height:2px;background:#c9c9cd"></div>
<div class="t" style="right:729.8px;top:725.48px;font-size:9px;color:#55565a">&ndash;</div>
<div class="t" style="right:729.8px;top:744.68px;font-size:9px;color:#55565a">&ndash;</div>
<div class="t" style="right:630.3px;top:699.48px;font-size:9px;color:#8d8d92;-webkit-text-stroke:0"><span style="font-weight:bold;color:#3a3b3f;font-size:8.4px;-webkit-text-stroke:0">Jun</span> (2022)</div>
<div class="b" style="left:851.2px;top:718.6px;width:94.3px;height:2px;background:#c9c9cd"></div>
<div class="b" style="left:851.2px;top:738.3px;width:94.3px;height:1px;background:#e0e0e4"></div>
<div class="b" style="left:851.2px;top:756.3px;width:94.3px;height:2px;background:#c9c9cd"></div>
<div class="t" style="right:630.3px;top:725.48px;font-size:9px;color:#55565a">&ndash;</div>
<div class="t" style="right:630.3px;top:744.68px;font-size:9px;color:#55565a">&ndash;</div>
<div class="t" style="right:535.7px;top:699.48px;font-size:9px;color:#8d8d92;-webkit-text-stroke:0"><span style="font-weight:bold;color:#3a3b3f;font-size:8.4px;-webkit-text-stroke:0">Jul</span> (2022)</div>
<div class="b" style="left:950.7px;top:718.6px;width:90.2px;height:2px;background:#c9c9cd"></div>
<div class="b" style="left:950.7px;top:738.3px;width:90.2px;height:1px;background:#e0e0e4"></div>
<div class="b" style="left:950.7px;top:756.3px;width:90.2px;height:2px;background:#c9c9cd"></div>
<div class="t" style="right:535.7px;top:725.48px;font-size:9px;color:#55565a">&ndash;</div>
<div class="t" style="right:535.7px;top:744.68px;font-size:9px;color:#55565a">&ndash;</div>
<div class="t" style="right:436.1px;top:699.48px;font-size:9px;color:#8d8d92;-webkit-text-stroke:0"><span style="font-weight:bold;color:#3a3b3f;font-size:8.4px;-webkit-text-stroke:0">Aug</span> (2022)</div>
<div class="b" style="left:1044.9px;top:718.6px;width:96.2px;height:2px;background:#c9c9cd"></div>
<div class="b" style="left:1044.9px;top:738.3px;width:96.2px;height:1px;background:#e0e0e4"></div>
<div class="b" style="left:1044.9px;top:756.3px;width:96.2px;height:2px;background:#c9c9cd"></div>
<div class="t" style="right:436.1px;top:725.48px;font-size:9px;color:#55565a">&ndash;</div>
<div class="t" style="right:436.1px;top:744.68px;font-size:9px;color:#55565a">&ndash;</div>
<div class="t" style="right:334.0px;top:699.48px;font-size:9px;color:#8d8d92;-webkit-text-stroke:0"><span style="font-weight:bold;color:#3a3b3f;font-size:8.4px;-webkit-text-stroke:0">Sep</span> (2022)</div>
<div class="b" style="left:1144.4px;top:718.6px;width:98.1px;height:2px;background:#c9c9cd"></div>
<div class="b" style="left:1144.4px;top:738.3px;width:98.1px;height:1px;background:#e0e0e4"></div>
<div class="b" style="left:1144.4px;top:756.3px;width:98.1px;height:2px;background:#c9c9cd"></div>
<div class="t" style="right:334.0px;top:725.48px;font-size:9px;color:#55565a">&ndash;</div>
<div class="t" style="right:334.0px;top:744.68px;font-size:9px;color:#55565a">&ndash;</div>
<div class="t" style="right:236.7px;top:699.48px;font-size:9px;color:#8d8d92;-webkit-text-stroke:0"><span style="font-weight:bold;color:#3a3b3f;font-size:8.4px;-webkit-text-stroke:0">Oct</span> (2022)</div>
<div class="b" style="left:1246.9px;top:718.6px;width:92.3px;height:2px;background:#c9c9cd"></div>
<div class="b" style="left:1246.9px;top:738.3px;width:92.3px;height:1px;background:#e0e0e4"></div>
<div class="b" style="left:1246.9px;top:756.3px;width:92.3px;height:2px;background:#c9c9cd"></div>
<div class="t" style="right:236.7px;top:725.48px;font-size:9px;color:#55565a">&ndash;</div>
<div class="t" style="right:236.7px;top:744.68px;font-size:9px;color:#55565a">&ndash;</div>
<div class="t" style="right:134.5px;top:699.48px;font-size:9px;color:#8d8d92;-webkit-text-stroke:0"><span style="font-weight:bold;color:#3a3b3f;font-size:8.4px;-webkit-text-stroke:0">Nov</span> (2022)</div>
<div class="b" style="left:1343.5px;top:718.6px;width:97.8px;height:2px;background:#c9c9cd"></div>
<div class="b" style="left:1343.5px;top:738.3px;width:97.8px;height:1px;background:#e0e0e4"></div>
<div class="b" style="left:1343.5px;top:756.3px;width:97.8px;height:2px;background:#c9c9cd"></div>
<div class="t" style="right:134.5px;top:725.48px;font-size:9px;color:#55565a">&ndash;</div>
<div class="t" style="right:134.5px;top:744.68px;font-size:9px;color:#55565a">&ndash;</div>
<div class="t" style="right:29.9px;top:699.48px;font-size:9px;color:#8d8d92;-webkit-text-stroke:0"><span style="font-weight:bold;color:#3a3b3f;font-size:8.4px;-webkit-text-stroke:0">Dec</span> (2022)</div>
<div class="b" style="left:1445.7px;top:718.6px;width:104.3px;height:2px;background:#c9c9cd"></div>
<div class="b" style="left:1445.7px;top:738.3px;width:104.3px;height:1px;background:#e0e0e4"></div>
<div class="b" style="left:1445.7px;top:756.3px;width:104.3px;height:2px;background:#c9c9cd"></div>
<div class="t" style="right:29.9px;top:725.48px;font-size:9px;color:#55565a">&ndash;</div>
<div class="t" style="right:29.9px;top:744.68px;font-size:9px;color:#55565a">&ndash;</div>
<svg class="b" style="left:0;top:0;z-index:10" width="1574" height="759"><circle cx="773" cy="392.5" r="50.3" fill="none" stroke="rgba(0,0,0,0.07)" stroke-width="1"/><circle cx="773" cy="392.5" r="45" fill="none" stroke="#fff" stroke-width="10"/><circle cx="773" cy="392.5" r="40" fill="rgba(0,0,0,0.4)"/><path d="M765,373.5 Q760.5,371 760.5,376.5 L760.5,409 Q760.5,414.5 765,412 L789,396 Q793,393 789,390 Z" fill="#fff" stroke="#fff" stroke-width="1.5" stroke-linejoin="round"/></svg>
</body></html>
